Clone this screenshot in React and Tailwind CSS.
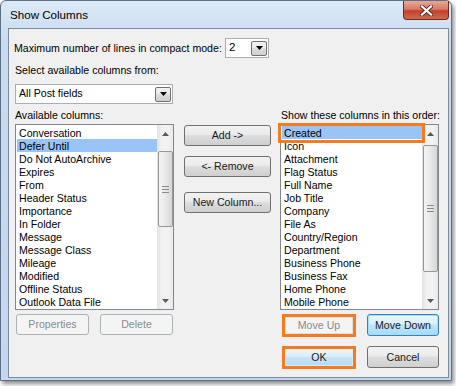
import React from "react";

const LEFT_ITEMS = [
  "Conversation",
  "Defer Until",
  "Do Not AutoArchive",
  "Expires",
  "From",
  "Header Status",
  "Importance",
  "In Folder",
  "Message",
  "Message Class",
  "Mileage",
  "Modified",
  "Offline Status",
  "Outlook Data File",
];

const RIGHT_ITEMS = [
  "Created",
  "Icon",
  "Attachment",
  "Flag Status",
  "Full Name",
  "Job Title",
  "Company",
  "File As",
  "Country/Region",
  "Department",
  "Business Phone",
  "Business Fax",
  "Home Phone",
  "Mobile Phone",
];

const BTN = {
  normal:
    "border-[#707070] bg-[linear-gradient(#f2f2f2,#ebebeb_45%,#dddddd_50%,#cfcfcf)] text-[#1a1a1a]",
  disabled: "border-[#adb2b5] bg-[#f4f4f4] text-[#8b8b8b]",
  focus:
    "border-[#3c7fb1] bg-[linear-gradient(#eaf6fd,#d9f0fc_45%,#bee6fd_50%,#a7d9f5)] text-[#1a1a1a] shadow-[inset_0_0_0_1px_#9fe0fb]",
  def: "border-[#d8ecf8] bg-[linear-gradient(#e8f4fc,#dcedf9_45%,#c6e3f6_50%,#b9dcf3)] text-[#1a1a1a]",
};

function Btn({ children, variant = "normal", className = "" }) {
  return (
    <div
      className={`flex items-center justify-center whitespace-nowrap rounded-[3px] border leading-none ${BTN[variant]} ${className}`}
    >
      {children}
    </div>
  );
}

function Arrow({ up }) {
  return (
    <svg width="7" height="4" viewBox="0 0 7 4">
      {up ? (
        <path d="M0 4 L3.5 0 L7 4 Z" fill="#5a5a5a" />
      ) : (
        <path d="M0 0 L7 0 L3.5 4 Z" fill="#5a5a5a" />
      )}
    </svg>
  );
}

function DropBtn() {
  return (
    <div className="mr-[1px] flex h-[15px] w-[16px] items-center justify-center rounded-[2px] border border-[#707070] bg-[linear-gradient(#f2f2f2,#ebebeb_45%,#dddddd_50%,#cfcfcf)]">
      <svg width="7" height="4" viewBox="0 0 7 4">
        <path d="M0 0 L7 0 L3.5 4 Z" fill="#000" />
      </svg>
    </div>
  );
}

function Scrollbar({ gap, thumb }) {
  return (
    <div className="flex w-[16px] flex-col items-center bg-[linear-gradient(90deg,#e3e3e3,#f2f2f2_30%,#f2f2f2_70%,#e8e8e8)]">
      <div className="flex h-[17px] w-full items-center justify-center">
        <Arrow up />
      </div>
      <div style={{ height: gap }} />
      <div
        className="flex w-[15px] flex-col items-center justify-center gap-[2px] rounded-[2px] border border-[#979797] bg-[linear-gradient(90deg,#f4f4f4,#e8e8e8_50%,#d6d6d6)]"
        style={{ height: thumb }}
      >
        <div className="h-px w-[7px] bg-[#8a8a8a]" />
        <div className="h-px w-[7px] bg-[#8a8a8a]" />
        <div className="h-px w-[7px] bg-[#8a8a8a]" />
      </div>
      <div className="flex-1" />
      <div className="flex h-[17px] w-full items-center justify-center">
        <Arrow />
      </div>
    </div>
  );
}

function ListBox({ items, selected, gap, thumb, children }) {
  return (
    <div className="relative flex h-[186px] w-[159px] border border-[#828790] bg-white">
      <div className="flex min-w-0 flex-1 flex-col pt-[1px]">
        {items.map((it) => (
          <div
            key={it}
            className={`ml-[1px] h-[13px] whitespace-nowrap pl-[2px] leading-[14px] ${
              it === selected ? "bg-[#99c4f5]" : ""
            }`}
          >
            {it}
          </div>
        ))}
      </div>
      <Scrollbar gap={gap} thumb={thumb} />
      {children}
    </div>
  );
}

export default function App() {
  return (
    <div className="h-[386px] w-[456px] overflow-hidden whitespace-nowrap bg-white font-['Liberation_Sans',Arial,sans-serif] text-[10.6px] text-black">
      <div className="flex h-[381px] w-[452px] flex-col rounded-t-[6px] border border-[#5d6f84] bg-[linear-gradient(#dce9f7,#c8dbf0_40px,#c3d7ee)] pb-[2px] pl-[7px] pr-[2px] shadow-[2px_3px_4px_rgba(0,0,0,0.45)]">
        {/* title bar */}
        <div className="flex h-[27px] items-start justify-between">
          <div className="pl-[2px] pt-[6px] text-[11.6px] leading-[15px]">Show Columns</div>
          <div className="flex h-[19px] w-[46px] items-center justify-center rounded-b-[4px] border border-t-0 border-[#6e2a1f] bg-[linear-gradient(#e9a898,#d77a64_45%,#c2402a_55%,#cf6a50)]">
            <svg width="13" height="11" viewBox="0 0 13 11">
              <path d="M2 1.5 L11 9.5 M11 1.5 L2 9.5" stroke="#5b2a22" strokeWidth="4" strokeLinecap="square" />
              <path d="M2 1.5 L11 9.5 M11 1.5 L2 9.5" stroke="#fff" strokeWidth="2.2" strokeLinecap="square" />
            </svg>
          </div>
        </div>

        {/* content */}
        <div className="flex h-[350px] flex-col border border-[#7e8a97] bg-[#f0f0f0]">
          {/* row 1 */}
          <div className="mt-[9px] flex items-center pl-[5px]">
            <div className="w-[211px] leading-[14px]">Maximum number of lines in compact mode:</div>
            <div className="flex h-[20px] w-[44px] items-center justify-between border border-[#abadb3] bg-white pl-[3px]">
              <span className="text-[11.5px]">2</span>
              <DropBtn />
            </div>
          </div>

          <div className="flex items-start">
            {/* left column */}
            <div className="ml-[6px] flex w-[159px] flex-col">
              <div className="mt-[5px] leading-[14px]">Select available columns from:</div>
              <div className="mt-[7px] flex h-[20px] w-[158px] items-center justify-between border border-[#abadb3] bg-white pl-[3px]">
                <span>All Post fields</span>
                <DropBtn />
              </div>
              <div className="mt-[4px] leading-[14px]">Available columns:</div>
              <div className="mt-[2px]">
                <ListBox items={LEFT_ITEMS} selected="Defer Until" gap={9} thumb={76} />
              </div>
              <div className="mt-[4px] flex gap-[11px] pl-[1px]">
                <Btn variant="disabled" className="h-[21px] w-[73px]">Properties</Btn>
                <Btn variant="disabled" className="h-[21px] w-[73px]">Delete</Btn>
              </div>
            </div>

            {/* middle column */}
            <div className="ml-[10px] mt-[67px] flex w-[87px] flex-col gap-[10px]">
              <Btn className="h-[21px]">Add -&gt;</Btn>
              <Btn className="h-[21px]">&lt;- Remove</Btn>
              <Btn className="mt-[5px] h-[21px]">New Column...</Btn>
            </div>

            {/* right column */}
            <div className="ml-[9px] mt-[50px] flex w-[159px] flex-col">
              <div className="pl-[1px] leading-[14px]">Show these columns in this order:</div>
              <div className="mt-[2px]">
                <ListBox items={RIGHT_ITEMS} selected="Created" gap={3} thumb={127}>
                  <div className="absolute left-[-3px] top-[-2px] h-[20px] w-[147px] border-[3px] border-[#f47b20]" />
                </ListBox>
              </div>
              <div className="mt-[4px] flex items-start">
                <div className="ml-[2px] h-[23px] w-[74px] border-[3px] border-[#f47b20] bg-[#f4f4f4]">
                  <Btn variant="disabled" className="h-full w-full rounded-none border-[#e0e0e0]">Move Up</Btn>
                </div>
                <Btn variant="focus" className="ml-[11px] h-[22px] w-[72px]">Move Down</Btn>
              </div>
              <div className="mt-[9px] flex items-start">
                <div className="ml-[2px] h-[23px] w-[74px] border-[3px] border-[#f47b20]">
                  <Btn variant="def" className="h-full w-full rounded-none">OK</Btn>
                </div>
                <Btn className="ml-[11px] h-[22px] w-[72px]">Cancel</Btn>
              </div>
            </div>
          </div>
        </div>
      </div>
    </div>
  );
}
